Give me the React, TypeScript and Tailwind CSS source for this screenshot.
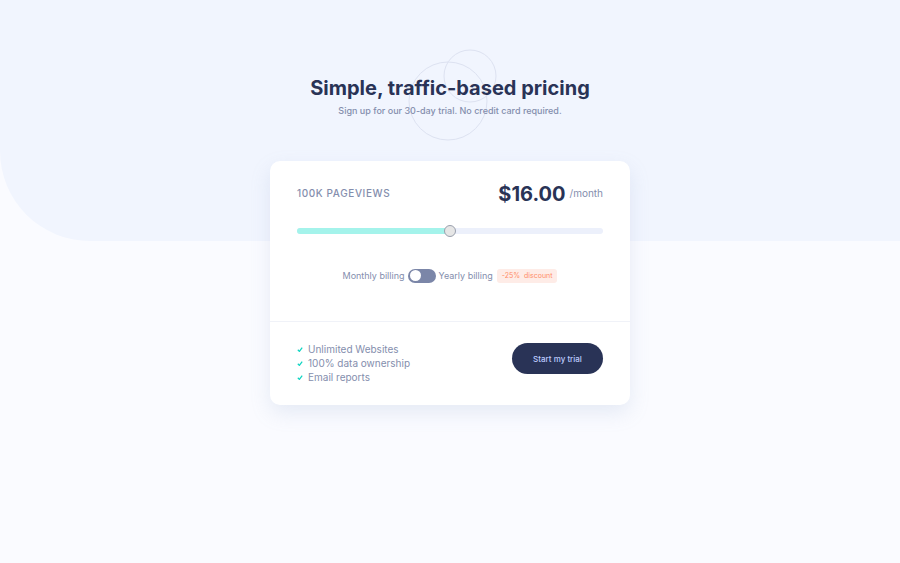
import React from "react";

const font = { fontFamily: "Inter, 'Noto Sans', sans-serif" };

function Check() {
  return (
    <svg width="6" height="5" viewBox="0 0 9 8" className="shrink-0">
      <path d="M1 4.5l2.5 2.5L8 1" fill="none" stroke="#10d5c2" strokeWidth="2" />
    </svg>
  );
}

export default function App() {
  return (
    <div className="relative min-h-[563px] w-full overflow-hidden bg-[#fafbff]" style={font}>
      {/* top band */}
      <div className="absolute left-0 top-0 h-[241px] w-full rounded-bl-[90px] bg-[#f1f5fe]" />

      <div className="relative flex flex-col items-center">
        <div className="relative mt-[75px] flex flex-col items-center">
          <svg className="absolute left-1/2 top-[-26px] -translate-x-1/2" width="120" height="120" viewBox="0 0 120 120">
            <circle cx="58" cy="52" r="39" fill="none" stroke="#dde2f1" strokeWidth="1" />
            <circle cx="80" cy="27" r="26" fill="none" stroke="#dde2f1" strokeWidth="1" />
          </svg>
          <h1 className="relative text-[20px] font-bold leading-[26px] text-[#293356]">
            Simple, traffic-based pricing
          </h1>
          <p className="relative mt-[3px] text-[9px] font-medium text-[#848ead]">
            Sign up for our 30-day trial. No credit card required.
          </p>
        </div>

        <div className="relative mt-[43px] w-[360px] rounded-[10px] bg-white shadow-[0_8px_20px_rgba(140,160,200,0.18)]">
          <div className="px-[27px] pt-[23px] pb-[38px]">
            <div className="flex items-center justify-between">
              <span className="text-[10px] font-medium tracking-[0.06em] text-[#848ead]">100K PAGEVIEWS</span>
              <div className="flex items-center gap-[4px]">
                <span className="text-[20px] font-bold leading-none text-[#293356]">$16.00</span>
                <span className="text-[10px] font-normal text-[#848ead]">/month</span>
              </div>
            </div>

            <div className="relative mt-[24px] h-[6px] w-full rounded-full bg-[#ecf0fb]">
              <div className="h-full w-1/2 rounded-full bg-[#a4f3eb]" />
              <div className="absolute left-1/2 top-1/2 h-[12px] w-[12px] -translate-x-1/2 -translate-y-1/2 rounded-full border border-[#9aa0ad] bg-[#e6e6e6]" />
            </div>

            <div className="mt-[35px] flex items-center justify-center text-[9px] font-normal text-[#848ead]">
              <span>Monthly billing</span>
              <div className="ml-[3px] mr-[3px] flex h-[14px] w-[28px] items-center rounded-full bg-[#7b86a8] px-[2px]">
                <div className="h-[11px] w-[11px] rounded-full bg-white" />
              </div>
              <span>Yearly billing</span>
              <span className="ml-[4px] rounded-[3px] bg-[#feece7] px-[5px] py-[2px] text-[7px] text-[#ff8d68]">
                -25%&nbsp; discount
              </span>
            </div>
          </div>

          <div className="h-px w-full bg-[#f0f2f8]" />

          <div className="flex items-center justify-between px-[27px] pt-[21px] pb-[21px]">
            <ul className="flex flex-col gap-[1px] text-[10px] font-normal leading-[13px] text-[#848ead]">
              <li className="flex items-center gap-[5px]"><Check />Unlimited Websites</li>
              <li className="flex items-center gap-[5px]"><Check />100% data ownership</li>
              <li className="flex items-center gap-[5px]"><Check />Email reports</li>
            </ul>
            <button className="mb-[10px] h-[31px] w-[91px] rounded-full bg-[#293356] text-[8px] font-medium text-[#bdccff]">
              Start my trial
            </button>
          </div>
        </div>
      </div>
    </div>
  );
}
